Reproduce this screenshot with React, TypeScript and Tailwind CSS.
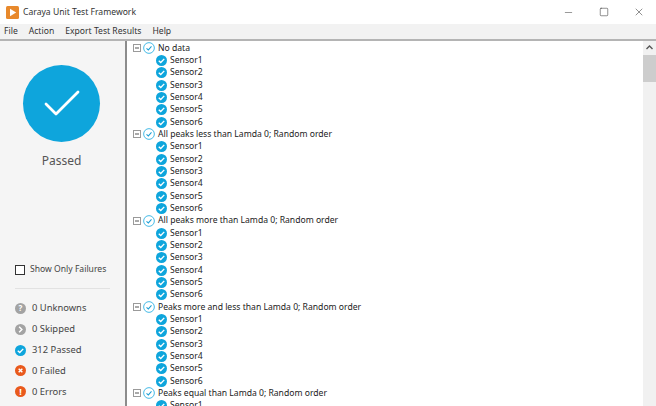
import { Check, Minus, Square, X } from 'lucide-react';

const groups = [
    'No data',
    'All peaks less than Lamda 0; Random order',
    'All peaks more than Lamda 0; Random order',
    'Peaks more and less than Lamda 0; Random order',
    'Peaks equal than Lamda 0; Random order',
];
const sensors = ['Sensor1', 'Sensor2', 'Sensor3', 'Sensor4', 'Sensor5', 'Sensor6'];

function PassedDot({ size = 11 }: { size?: number }) {
    return (
        <svg width={size} height={size} viewBox="0 0 12 12" className="shrink-0">
            <circle cx="6" cy="6" r="6" fill="#0ea5dc" />
            <path d="M3 6.2 L5.2 8.2 L9 4.2" fill="none" stroke="#fff" strokeWidth="1.5" />
        </svg>
    );
}

function GroupIcon() {
    return (
        <svg width={12} height={12} viewBox="0 0 13 13" className="shrink-0">
            <circle cx="6.5" cy="6.5" r="5.8" fill="#fff" stroke="#35b4e4" strokeWidth="1" />
            <path d="M3.8 6.8 L5.8 8.6 L9.2 4.8" fill="none" stroke="#1b9fd6" strokeWidth="1.1" />
        </svg>
    );
}

function Expander() {
    return (
        <svg width={8} height={8} viewBox="0 0 8 8" className="shrink-0">
            <rect x="0.5" y="0.5" width="7" height="7" fill="#fff" stroke="#9a9a9a" />
            <path d="M2 4 H6" stroke="#555" />
        </svg>
    );
}

function Summary({ icon, label }: { icon: React.ReactNode; label: string }) {
    return (
        <div className="flex items-center gap-[6px] h-[20.8px] text-[#444] text-[9.4px]">
            {icon}
            <span>{label}</span>
        </div>
    );
}

export default function App() {
    return (
        <div className="w-[656px] h-[406px] overflow-hidden flex flex-col bg-white text-[8.6px] text-[#222] font-['Noto_Sans',sans-serif]">
            {/* Title bar */}
            <header className="h-[24px] flex items-center pl-[6px] shrink-0">
                <svg width={13} height={13} viewBox="0 0 13 13" className="shrink-0">
                    <rect width="13" height="13" rx="1.5" fill="#e8892c" />
                    <path d="M4 2.8 L10.2 6.5 L4 10.2 Z" fill="#fff" />
                </svg>
                <span className="ml-[4px] text-[#333]">Caraya Unit Test Framework</span>
                <div className="ml-auto flex items-center text-[#222]">
                    <span className="w-[35px] flex justify-center"><Minus size={11} strokeWidth={1} /></span>
                    <span className="w-[35px] flex justify-center"><Square size={10} strokeWidth={1.2} /></span>
                    <span className="w-[35px] flex justify-center"><X size={12} strokeWidth={1} /></span>
                </div>
            </header>

            {/* Menu */}
            <nav className="h-[15px] flex items-center gap-[11px] pl-[4px] bg-[#f2f2f2] shrink-0 text-[#333]">
                <span>File</span>
                <span>Action</span>
                <span>Export Test Results</span>
                <span>Help</span>
            </nav>

            <div className="flex flex-1 min-h-0 border-t-2 border-[#b4b4b4]">
                {/* Left panel */}
                <aside className="w-[127px] shrink-0 bg-[#f5f5f5] border-r-2 border-[#8c8c8c] flex flex-col items-stretch">
                    <div className="flex flex-col items-center pt-[24px] pr-[2px]">
                        <div className="w-[77px] h-[77px] rounded-full bg-[#0ea5dc] flex items-center justify-center">
                            <Check size={48} strokeWidth={1.4} className="text-white" />
                        </div>
                        <span className="mt-[10px] text-[12px] text-[#555]">Passed</span>
                    </div>
                    <div className="mt-auto pl-[15px] pr-[15px] pb-[4px]">
                        <label className="flex items-center gap-[5px] text-[#444] whitespace-nowrap">
                            <span className="w-[10px] h-[10px] border border-[#333] bg-white shrink-0" />
                            Show Only Failures
                        </label>
                        <div className="h-px bg-[#e2e2e2] mt-[12px] mb-[9px]" />
                        <Summary
                            label="0 Unknowns"
                            icon={
                                <span className="w-[11px] h-[11px] rounded-full bg-[#a3a3a3] text-white text-[8px] font-bold flex items-center justify-center">?</span>
                            }
                        />
                        <Summary
                            label="0 Skipped"
                            icon={
                                <svg width={11} height={11} viewBox="0 0 12 12">
                                    <circle cx="6" cy="6" r="6" fill="#a3a3a3" />
                                    <path d="M4.5 3 L7.5 6 L4.5 9" fill="none" stroke="#fff" strokeWidth="1.6" />
                                </svg>
                            }
                        />
                        <Summary label="312 Passed" icon={<PassedDot />} />
                        <Summary
                            label="0 Failed"
                            icon={
                                <svg width={11} height={11} viewBox="0 0 12 12">
                                    <circle cx="6" cy="6" r="6" fill="#e9591c" />
                                    <path d="M4 4 L8 8 M8 4 L4 8" stroke="#fff" strokeWidth="1.6" />
                                </svg>
                            }
                        />
                        <Summary
                            label="0 Errors"
                            icon={
                                <span className="w-[11px] h-[11px] rounded-full bg-[#e9591c] text-white text-[9px] font-bold flex items-center justify-center">!</span>
                            }
                        />
                    </div>
                </aside>

                {/* Test tree */}
                <main className="flex-1 min-w-0 overflow-hidden pl-[6px] pt-[1px]">
                    {groups.map((group) => (
                        <div key={group}>
                            <div className="h-[12.33px] flex items-center">
                                <Expander />
                                <span className="w-[2px]" />
                                <GroupIcon />
                                <span className="ml-[3px]">{group}</span>
                            </div>
                            {sensors.map((sensor) => (
                                <div key={sensor} className="h-[12.33px] flex items-center pl-[23px] gap-[3px]">
                                    <PassedDot size={11} />
                                    <span>{sensor}</span>
                                </div>
                            ))}
                        </div>
                    ))}
                </main>

                {/* Scrollbar */}
                <div className="w-[13px] shrink-0 bg-[#f1f1f1] flex flex-col items-center">
                    <svg width={9} height={14} viewBox="0 0 9 14" className="shrink-0">
                        <path d="M1.5 8 L4.5 5 L7.5 8" fill="none" stroke="#555" strokeWidth="1.4" />
                    </svg>
                    <div className="w-full h-[27px] bg-[#cdcdcd]" />
                </div>
            </div>
        </div>
    );
}
